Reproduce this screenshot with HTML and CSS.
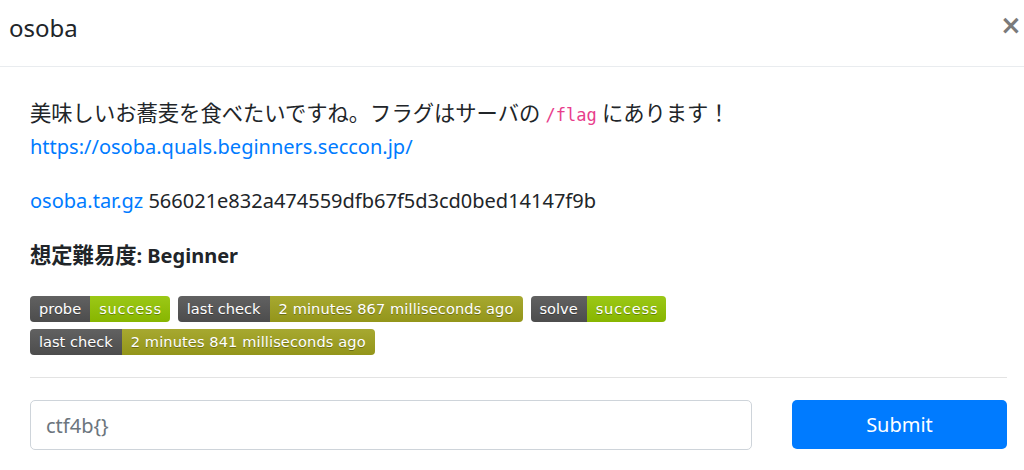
FILE: index.html
```html
<!DOCTYPE html>
<html lang="ja">
<head>
<meta charset="utf-8">
<title>osoba</title>
<link rel="stylesheet" href="styles.css">
</head>
<body>
<div class="modal">
  <div class="modal-header">
    <h5 class="modal-title">osoba</h5>
    <button class="close" type="button" aria-label="Close">×</button>
  </div>
  <div class="modal-body">
    <p><span class="ja">美味しいお蕎麦を食べたいですね。フラグはサーバの</span> <code>/flag</code> <span class="ja">にあります！</span><br><a href="#">https://osoba.quals.beginners.seccon.jp/</a></p>
    <p><a href="#">osoba.tar.gz</a> 566021e832a474559dfb67f5d3cd0bed14147f9b</p>
    <p class="level"><span class="ja">想定難易度</span>: Beginner</p>
    <div class="badges">
      <span class="badge"><span class="lbl">probe</span><span class="val green">success</span></span>
      <span class="badge"><span class="lbl">last check</span><span class="val olive">2 minutes 867 milliseconds ago</span></span>
      <span class="badge"><span class="lbl">solve</span><span class="val green">success</span></span>
      <span class="badge"><span class="lbl">last check</span><span class="val olive">2 minutes 841 milliseconds ago</span></span>
    </div>
    <hr class="sep">
    <form class="flag-form">
      <input class="flag-input" type="text" placeholder="ctf4b{}">
      <button class="submit" type="button">Submit</button>
    </form>
  </div>
</div>
</body>
</html>
```

FILE: styles.css
```css
* { box-sizing: border-box; }
html, body { margin: 0; padding: 0; background: #fff; }
body {
  font-family: "Noto Sans", "Noto Sans CJK JP", sans-serif;
  color: #212529;
  font-size: 20px;
  overflow: hidden;
}
.modal { width: 1024px; }
.modal-header {
  height: 67px;
  display: flex;
  align-items: center;
  justify-content: space-between;
  padding: 0 0 0 9px;
  border-bottom: 1px solid #e9ecef;
}
.modal-title {
  margin: 0;
  font-size: 24px;
  font-weight: 400;
  line-height: 1.2;
  padding-bottom: 10px;
}
.close {
  border: 0;
  background: none;
  padding: 0;
  width: 18px;
  margin-right: 6px;
  margin-bottom: 16px;
  font-size: 26px;
  font-weight: 700;
  line-height: 1;
  color: #7a7a7a;
  font-family: "DejaVu Sans", sans-serif;
}
.modal-body { padding: 30px 17px 20px 30px; }
p { margin: 0 0 22px; line-height: 32px; }
.ja { font-size: 21.3px; }
a { color: #007bff; text-decoration: none; }
code {
  font-family: "DejaVu Sans Mono", "Liberation Mono", monospace;
  font-size: 17px;
  color: #e83e8c;
}
.level { font-weight: 700; margin-bottom: 24px; }
.badges {
  display: flex;
  flex-wrap: wrap;
  gap: 7px 8px;
  width: 680px;
}
.badge {
  display: inline-flex;
  height: 26px;
  border-radius: 4px;
  overflow: hidden;
  font-family: "DejaVu Sans", Verdana, sans-serif;
  font-size: 14.6px;
  color: #fff;
  text-shadow: 0 1px 0 rgba(1,1,1,0.3);
  line-height: 26px;
}
.badge .lbl, .badge .val {
  padding: 0 9px;
  background-image: linear-gradient(rgba(187,187,187,0.12), rgba(0,0,0,0.1));
}
.badge .lbl { background-color: #555; }
.badge .green {
  background-color: #97ca00;
  letter-spacing: 0.8px;
  padding-right: 8px;
}
.badge .olive {
  background-color: #a4a61d;
  letter-spacing: 0.1px;
}
.sep {
  border: 0;
  border-top: 1px solid #e3e3e3;
  margin: 22px 0 22px;
}
.flag-form {
  display: flex;
  align-items: center;
  gap: 40px;
}
.flag-input {
  flex: 0 0 722px;
  height: 50px;
  border: 1px solid #ced4da;
  border-radius: 5px;
  padding: 0 15px;
  font-family: inherit;
  font-size: 20px;
  color: #495057;
}
.flag-input::placeholder { color: #6c757d; }
.submit {
  flex: 1;
  height: 49px;
  margin-top: -2px;
  border: 0;
  border-radius: 5px;
  background: #007bff;
  color: #fff;
  font-family: inherit;
  font-size: 20px;
}
```
